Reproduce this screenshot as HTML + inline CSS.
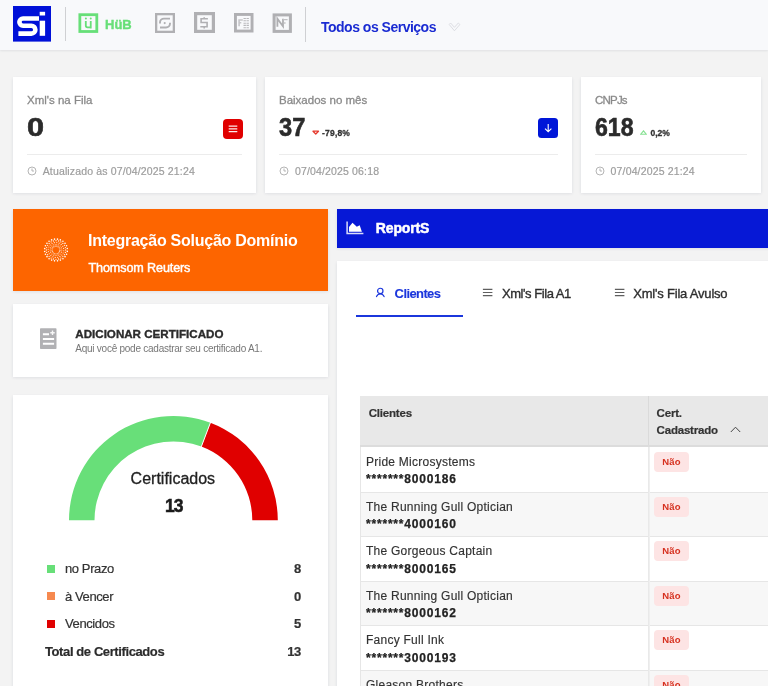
<!DOCTYPE html>
<html><head><meta charset="utf-8">
<style>
*{box-sizing:border-box;margin:0;padding:0}
html,body{width:768px;height:686px;overflow:hidden;background:#f3f3f3;font-family:"Liberation Sans",sans-serif;color:#333}
.a{position:absolute;white-space:nowrap;line-height:1}
.hdr{position:absolute;left:0;top:0;width:768px;height:50px;background:#f8f9fb;box-shadow:0 1px 2px rgba(60,70,90,.10)}
.card{position:absolute;background:#fff;box-shadow:0 0.5px 3px rgba(40,50,90,.12)}
.sep{position:absolute;width:1px;background:#cfd0d3}
.gico{position:absolute;border:3px solid #b2b2b5}
.lbl{font-size:11.5px;color:#8a8a8a;-webkit-text-stroke:0.3px #8a8a8a}
.big{font-size:26px;font-weight:bold;color:#2b2b2b;-webkit-text-stroke:0.6px #2b2b2b}
.foot{letter-spacing:0.15px;font-size:10.5px;color:#9d9d9d;-webkit-text-stroke:0.2px #9d9d9d}
.div{position:absolute;height:1px;background:#ececec}
.btn{position:absolute;width:20px;height:20px;border-radius:3px}
.tab{font-size:13px;color:#2e2e2e;-webkit-text-stroke:0.35px #2e2e2e}
.th{letter-spacing:-0.2px;font-size:11.5px;font-weight:bold;color:#333;-webkit-text-stroke:0.2px #333}
.row{position:absolute;left:360px;width:420px;border-bottom:1px solid #e6e6e6;border-left:1px solid #e6e6e6}
.row.g{background:#f7f7f7}
.nm{letter-spacing:0.25px;font-size:12px;color:#333;-webkit-text-stroke:0.15px #333}
.num{letter-spacing:0.8px;font-size:12px;font-weight:bold;color:#222;-webkit-text-stroke:0.25px #222}
.badge{position:absolute;left:654px;top:5px;width:35px;height:20px;border-radius:4px;background:#fde4e4;color:#d6301f;font-size:9.5px;letter-spacing:0.2px;font-weight:bold;text-align:center;line-height:20px}
.cdiv{position:absolute;left:288px;top:0;width:1px;height:100%;background:#e6e6e6}
.leg{letter-spacing:-0.4px;font-size:13px;-webkit-text-stroke:0.2px #333;color:#333}
.sq{position:absolute;width:8px;height:8px}
</style></head><body><div id="wrap" style="position:absolute;left:0;top:0;width:768px;height:686px;will-change:transform">
<div class="hdr"></div>
<!-- Si logo -->
<svg class="a" style="left:13px;top:6px" width="38" height="36" viewBox="0 0 38 36">
<rect width="38" height="35.6" fill="#0010d8"/>
<path d="M26 12.5 H10 A3.6 3.6 0 0 0 10 19.7 H18.4 A3.95 3.95 0 0 1 18.4 27.6 H5.4" fill="none" stroke="#fff" stroke-width="4.6"/>
<rect x="26.7" y="5.8" width="5.4" height="3.7" fill="#fff"/>
<rect x="26.7" y="14.7" width="5.4" height="15.1" fill="#fff"/>
</svg>
<div class="sep" style="left:65px;top:7px;height:34px"></div>
<!-- HuB -->

<svg class="a" style="left:78px;top:13px" width="21" height="21" viewBox="0 0 21 21">
<rect x="1.85" y="1.7" width="16.95" height="16.8" fill="none" stroke="#67df78" stroke-width="2.8"/>
<path d="M7.8 8 V12.6 Q7.8 14.3 9.5 14.3 H12.75 M12.75 8 V15.4" fill="none" stroke="#67df78" stroke-width="1.8"/>
<circle cx="7.9" cy="5.6" r="1" fill="#67df78"/><circle cx="12.75" cy="5.6" r="1" fill="#67df78"/>
</svg>
<div class="a" id="hub" style="left:105px;top:18px;font-size:13px;font-weight:bold;color:#67df78;-webkit-text-stroke:0.4px #67df78">HüB</div>
<!-- gray icons -->
<svg class="a" style="left:155px;top:13px" width="20" height="20" viewBox="0 0 20 20">
<rect x="1.15" y="1.15" width="17.7" height="17.7" fill="none" stroke="#b0b0b3" stroke-width="2.3"/>
<path d="M15 5.6 H9 A4 4 0 0 0 5 9.6 V10.5 M5 14.5 H11 A4 4 0 0 0 15 10.5 V9.7" fill="none" stroke="#b0b0b3" stroke-width="1.9"/>
<circle cx="9.7" cy="10.1" r="1.05" fill="#b0b0b3"/>
</svg>
<svg class="a" style="left:194px;top:12px" width="21" height="21" viewBox="0 0 21 21">
<rect x="1.6" y="1.6" width="17.8" height="17.8" fill="none" stroke="#b0b0b3" stroke-width="3.2"/>
<path d="M13.9 6.8 H7.1 V10.5 H13.1 V14.7 H6.3 M10.2 5.2 V6.8 M10.2 14.7 V16.4" fill="none" stroke="#b0b0b3" stroke-width="1.6"/>
</svg>
<svg class="a" style="left:234px;top:13px" width="20" height="20" viewBox="0 0 20 20">
<rect x="1.45" y="1.45" width="16.6" height="16.6" fill="none" stroke="#b0b0b3" stroke-width="2.9"/>
<path d="M5.1 13.3 V7.05 H8.8 M5.1 9.8 H7.3" fill="none" stroke="#c6c6c9" stroke-width="1.6"/>
<path d="M9.5 5.5 H15.2 M9.5 7.8 H15.2 M9.5 10.3 H15.2 M9.5 12.35 H15.2 M9.5 14.8 H15.2" fill="none" stroke="#b8b8bb" stroke-width="1.1" stroke-dasharray="2.4 0.6"/>
</svg>
<svg class="a" style="left:272px;top:13px" width="20" height="20" viewBox="0 0 20 20">
<rect x="2.1" y="1.9" width="16.3" height="16.5" fill="none" stroke="#b0b0b3" stroke-width="3"/>
<path d="M5.4 13.7 V5.8 L11 13.3 V5.8" fill="none" stroke="#aeaeb1" stroke-width="1.8"/>
<path d="M11 6.6 H15.6 M11.6 10 H13.6" fill="none" stroke="#c2c2c5" stroke-width="1.3"/>
</svg>
<div class="sep" style="left:305px;top:7px;height:34.5px"></div>
<div class="a" id="todos" style="left:321px;top:20px;font-size:14px;letter-spacing:-0.5px;font-weight:bold;color:#1a2bd2">Todos os Serviços</div>
<svg class="a" style="left:447px;top:20.8px" width="15" height="12" viewBox="0 0 15 12">
<path d="M2.2 3.5 L7.45 9.8 L12.9 3.5 L11.3 2 L7.45 6.3 L3.6 2 Z" fill="none" stroke="#d9dae0" stroke-width="0.9" stroke-linejoin="round"/>
</svg>

<!-- stat cards -->
<div class="card" style="left:13px;top:77px;width:243px;height:116px"></div>
<div class="a lbl" id="l1" style="left:27px;top:94.6px">Xml's na Fila</div>
<div class="a big" id="b1" style="left:27px;top:114px;transform:scaleX(1.18);transform-origin:0 0">0</div>
<div class="btn" style="left:222.6px;top:118.6px;background:#e00000;border-radius:4px"></div>
<svg class="a" style="left:222.6px;top:118.6px" width="20" height="20"><path d="M5.7 7.15 H14.3 M5.7 9.9 H14.3 M5.7 12.7 H14.3" stroke="#fff" stroke-width="1.3" opacity="0.92"/></svg>
<div class="div" style="left:27px;top:154px;width:215px"></div>
<svg class="a" style="left:27px;top:166px" width="10" height="10" viewBox="0 0 10 10"><circle cx="5" cy="5" r="4" fill="none" stroke="#b5b5b5" stroke-width="1"/><path d="M5 2.5 V5 H7" fill="none" stroke="#b5b5b5" stroke-width="1"/></svg>
<div class="a foot" id="f1" style="left:42.7px;top:166.3px">Atualizado às 07/04/2025 21:24</div>

<div class="card" style="left:265px;top:77px;width:307px;height:116px"></div>
<div class="a lbl" id="l2" style="left:279px;top:94.6px">Baixados no mês</div>
<div class="a big" id="b2" style="left:279px;top:114px;transform:scaleX(0.91);transform-origin:0 0">37</div>
<svg class="a" style="left:311.5px;top:130px" width="8" height="5" viewBox="0 0 8 5"><path d="M1 1.2 H6.5 L3.75 4 Z" fill="none" stroke="#e53a2e" stroke-width="1.3" stroke-linejoin="round"/></svg>
<div class="a" id="p2" style="left:322px;top:128.5px;font-size:8.5px;letter-spacing:0.2px;font-weight:bold;color:#333;-webkit-text-stroke:0.3px #333">-79,8%</div>
<div class="btn" style="left:538px;top:118.3px;background:#0016d8;border-radius:3.5px"></div>
<svg class="a" style="left:538px;top:118.3px" width="20" height="20"><path d="M10.2 6.1 V13.6 M7 10.6 L10.2 13.7 L13.4 10.6" fill="none" stroke="#fff" stroke-width="1.1"/></svg>
<div class="div" style="left:279px;top:154px;width:279px"></div>
<svg class="a" style="left:279px;top:166px" width="10" height="10" viewBox="0 0 10 10"><circle cx="5" cy="5" r="4" fill="none" stroke="#b5b5b5" stroke-width="1"/><path d="M5 2.5 V5 H7" fill="none" stroke="#b5b5b5" stroke-width="1"/></svg>
<div class="a foot" id="f2" style="left:295px;top:166.3px">07/04/2025 06:18</div>

<div class="card" style="left:581px;top:77px;width:180px;height:116px"></div>
<div class="a lbl" id="l3" style="left:595px;top:94.6px;letter-spacing:-0.8px">CNPJs</div>
<div class="a big" id="b3" style="left:595px;top:114px;transform:scaleX(0.89);transform-origin:0 0">618</div>
<svg class="a" style="left:640px;top:129.5px" width="7" height="5" viewBox="0 0 7 5"><path d="M0.8 4.2 H6.2 L3.5 0.8 Z" fill="none" stroke="#88e194" stroke-width="1.1"/></svg>
<div class="a" id="p3" style="left:650.5px;top:128.5px;font-size:8.5px;font-weight:bold;color:#333;-webkit-text-stroke:0.3px #333">0,2%</div>
<div class="div" style="left:595px;top:154px;width:152px"></div>
<svg class="a" style="left:595px;top:166px" width="10" height="10" viewBox="0 0 10 10"><circle cx="5" cy="5" r="4" fill="none" stroke="#b5b5b5" stroke-width="1"/><path d="M5 2.5 V5 H7" fill="none" stroke="#b5b5b5" stroke-width="1"/></svg>
<div class="a foot" id="f3" style="left:610.6px;top:166.3px">07/04/2025 21:24</div>

<!-- orange -->
<div class="card" style="left:13px;top:209px;width:315px;height:82px;background:#fd6500"></div>
<svg class="a" style="left:43px;top:236.5px" width="26" height="26" viewBox="0 0 26 26" id="tr"><circle cx="13" cy="13" r="3.9" fill="none" stroke="#fff" stroke-width="1.3" stroke-dasharray="0.8 0.6" opacity="0.75"/><circle cx="18.80" cy="13.00" r="0.55" fill="#fff" opacity="0.8"/><circle cx="18.36" cy="15.13" r="0.55" fill="#fff" opacity="0.8"/><circle cx="17.10" cy="16.94" r="0.55" fill="#fff" opacity="0.8"/><circle cx="15.22" cy="18.14" r="0.55" fill="#fff" opacity="0.8"/><circle cx="13.00" cy="18.57" r="0.55" fill="#fff" opacity="0.8"/><circle cx="10.78" cy="18.14" r="0.55" fill="#fff" opacity="0.8"/><circle cx="8.90" cy="16.94" r="0.55" fill="#fff" opacity="0.8"/><circle cx="7.64" cy="15.13" r="0.55" fill="#fff" opacity="0.8"/><circle cx="7.20" cy="13.00" r="0.55" fill="#fff" opacity="0.8"/><circle cx="7.64" cy="10.87" r="0.55" fill="#fff" opacity="0.8"/><circle cx="8.90" cy="9.06" r="0.55" fill="#fff" opacity="0.8"/><circle cx="10.78" cy="7.86" r="0.55" fill="#fff" opacity="0.8"/><circle cx="13.00" cy="7.43" r="0.55" fill="#fff" opacity="0.8"/><circle cx="15.22" cy="7.86" r="0.55" fill="#fff" opacity="0.8"/><circle cx="17.10" cy="9.06" r="0.55" fill="#fff" opacity="0.8"/><circle cx="18.36" cy="10.87" r="0.55" fill="#fff" opacity="0.8"/><circle cx="20.76" cy="13.75" r="0.6" fill="#fff" opacity="0.85"/><circle cx="20.14" cy="16.01" r="0.6" fill="#fff" opacity="0.85"/><circle cx="18.82" cy="17.98" r="0.6" fill="#fff" opacity="0.85"/><circle cx="16.93" cy="19.47" r="0.6" fill="#fff" opacity="0.85"/><circle cx="14.66" cy="20.32" r="0.6" fill="#fff" opacity="0.85"/><circle cx="12.22" cy="20.45" r="0.6" fill="#fff" opacity="0.85"/><circle cx="9.86" cy="19.85" r="0.6" fill="#fff" opacity="0.85"/><circle cx="7.81" cy="18.59" r="0.6" fill="#fff" opacity="0.85"/><circle cx="6.26" cy="16.77" r="0.6" fill="#fff" opacity="0.85"/><circle cx="5.38" cy="14.59" r="0.6" fill="#fff" opacity="0.85"/><circle cx="5.24" cy="12.25" r="0.6" fill="#fff" opacity="0.85"/><circle cx="5.86" cy="9.99" r="0.6" fill="#fff" opacity="0.85"/><circle cx="7.18" cy="8.02" r="0.6" fill="#fff" opacity="0.85"/><circle cx="9.07" cy="6.53" r="0.6" fill="#fff" opacity="0.85"/><circle cx="11.34" cy="5.68" r="0.6" fill="#fff" opacity="0.85"/><circle cx="13.78" cy="5.55" r="0.6" fill="#fff" opacity="0.85"/><circle cx="16.14" cy="6.15" r="0.6" fill="#fff" opacity="0.85"/><circle cx="18.19" cy="7.41" r="0.6" fill="#fff" opacity="0.85"/><circle cx="19.74" cy="9.23" r="0.6" fill="#fff" opacity="0.85"/><circle cx="20.62" cy="11.41" r="0.6" fill="#fff" opacity="0.85"/><circle cx="22.70" cy="13.00" r="0.65" fill="#fff" opacity="0.9"/><circle cx="22.37" cy="15.41" r="0.65" fill="#fff" opacity="0.9"/><circle cx="21.40" cy="17.66" r="0.65" fill="#fff" opacity="0.9"/><circle cx="19.86" cy="19.58" r="0.65" fill="#fff" opacity="0.9"/><circle cx="17.85" cy="21.06" r="0.65" fill="#fff" opacity="0.9"/><circle cx="15.51" cy="21.99" r="0.65" fill="#fff" opacity="0.9"/><circle cx="13.00" cy="22.31" r="0.65" fill="#fff" opacity="0.9"/><circle cx="10.49" cy="21.99" r="0.65" fill="#fff" opacity="0.9"/><circle cx="8.15" cy="21.06" r="0.65" fill="#fff" opacity="0.9"/><circle cx="6.14" cy="19.58" r="0.65" fill="#fff" opacity="0.9"/><circle cx="4.60" cy="17.66" r="0.65" fill="#fff" opacity="0.9"/><circle cx="3.63" cy="15.41" r="0.65" fill="#fff" opacity="0.9"/><circle cx="3.30" cy="13.00" r="0.65" fill="#fff" opacity="0.9"/><circle cx="3.63" cy="10.59" r="0.65" fill="#fff" opacity="0.9"/><circle cx="4.60" cy="8.34" r="0.65" fill="#fff" opacity="0.9"/><circle cx="6.14" cy="6.42" r="0.65" fill="#fff" opacity="0.9"/><circle cx="8.15" cy="4.94" r="0.65" fill="#fff" opacity="0.9"/><circle cx="10.49" cy="4.01" r="0.65" fill="#fff" opacity="0.9"/><circle cx="13.00" cy="3.69" r="0.65" fill="#fff" opacity="0.9"/><circle cx="15.51" cy="4.01" r="0.65" fill="#fff" opacity="0.9"/><circle cx="17.85" cy="4.94" r="0.65" fill="#fff" opacity="0.9"/><circle cx="19.86" cy="6.42" r="0.65" fill="#fff" opacity="0.9"/><circle cx="21.40" cy="8.34" r="0.65" fill="#fff" opacity="0.9"/><circle cx="22.37" cy="10.59" r="0.65" fill="#fff" opacity="0.9"/><circle cx="24.30" cy="14.42" r="0.8" fill="#fff" opacity="1"/><circle cx="23.54" cy="17.18" r="0.8" fill="#fff" opacity="1"/><circle cx="22.05" cy="19.65" r="0.8" fill="#fff" opacity="1"/><circle cx="19.95" cy="21.68" r="0.8" fill="#fff" opacity="1"/><circle cx="17.37" cy="23.11" r="0.8" fill="#fff" opacity="1"/><circle cx="14.50" cy="23.85" r="0.8" fill="#fff" opacity="1"/><circle cx="11.52" cy="23.85" r="0.8" fill="#fff" opacity="1"/><circle cx="8.65" cy="23.11" r="0.8" fill="#fff" opacity="1"/><circle cx="6.07" cy="21.69" r="0.8" fill="#fff" opacity="1"/><circle cx="3.96" cy="19.67" r="0.8" fill="#fff" opacity="1"/><circle cx="2.47" cy="17.20" r="0.8" fill="#fff" opacity="1"/><circle cx="1.70" cy="14.44" r="0.8" fill="#fff" opacity="1"/><circle cx="1.70" cy="11.58" r="0.8" fill="#fff" opacity="1"/><circle cx="2.46" cy="8.82" r="0.8" fill="#fff" opacity="1"/><circle cx="3.95" cy="6.35" r="0.8" fill="#fff" opacity="1"/><circle cx="6.05" cy="4.32" r="0.8" fill="#fff" opacity="1"/><circle cx="8.63" cy="2.89" r="0.8" fill="#fff" opacity="1"/><circle cx="11.50" cy="2.15" r="0.8" fill="#fff" opacity="1"/><circle cx="14.48" cy="2.15" r="0.8" fill="#fff" opacity="1"/><circle cx="17.35" cy="2.89" r="0.8" fill="#fff" opacity="1"/><circle cx="19.93" cy="4.31" r="0.8" fill="#fff" opacity="1"/><circle cx="22.04" cy="6.33" r="0.8" fill="#fff" opacity="1"/><circle cx="23.53" cy="8.80" r="0.8" fill="#fff" opacity="1"/><circle cx="24.30" cy="11.56" r="0.8" fill="#fff" opacity="1"/></svg>
<div class="a" id="integ" style="left:88px;top:232.6px;letter-spacing:-0.25px;font-size:16px;font-weight:bold;color:#fff">Integração Solução Domínio</div>
<div class="a" id="thom" style="left:88.5px;top:262.3px;font-size:12.6px;letter-spacing:-0.12px;color:#fff;-webkit-text-stroke:0.45px #fff">Thomsom Reuters</div>

<!-- add cert -->
<div class="card" style="left:13px;top:304px;width:315px;height:73px"></div>
<svg class="a" style="left:40px;top:328px" width="17" height="22" viewBox="0 0 17 22">
<rect x="0" y="0.3" width="16.5" height="20.8" rx="0.8" fill="#b1b1b4"/>
<path d="M2.9 6.2 H9 M2.9 11.1 H14.1 M2.9 15.8 H14.1" stroke="#fff" stroke-width="2"/>
<path d="M12.5 2.6 V7 M10.3 4.8 H14.7" stroke="#fff" stroke-width="1.4" opacity="0.9"/>
</svg>
<div class="a" id="adic" style="left:75.3px;top:327.8px;font-size:11.6px;letter-spacing:0px;font-weight:bold;color:#2b2b2b;-webkit-text-stroke:0.35px #2b2b2b">ADICIONAR CERTIFICADO</div>
<div class="a" id="aqui" style="left:75.3px;top:343.5px;font-size:10px;letter-spacing:-0.25px;color:#777">Aqui você pode cadastrar seu certificado A1.</div>

<!-- gauge card -->
<div class="card" style="left:13px;top:395px;width:315px;height:300px"></div>
<svg class="a" style="left:0;top:390px" width="340" height="140" viewBox="0 390 340 140" id="gauge"><path d="M69.00 520.30 A104.4 104.4 0 0 1 210.42 422.68 L201.38 446.53 A78.9 78.9 0 0 0 94.50 520.30 Z" fill="#68df79"/><path d="M210.42 422.68 A104.4 104.4 0 0 1 277.80 520.30 L252.30 520.30 A78.9 78.9 0 0 0 201.38 446.53 Z" fill="#e00000"/><path d="M210.78 421.75 L201.02 447.46" stroke="#fff" stroke-width="1"/></svg>
<div class="a" id="certs" style="left:130.6px;top:471px;font-size:16px;color:#222;-webkit-text-stroke:0.3px #222">Certificados</div>
<div class="a" id="c13" style="left:165px;top:498px;font-size:17.5px;letter-spacing:-1px;font-weight:bold;color:#1a1a1a;-webkit-text-stroke:0.5px #1a1a1a">13</div>

<div class="sq" style="left:47px;top:564.5px;background:#67df78"></div>
<div class="a leg" id="lg1" style="left:65px;top:562.4px">no Prazo</div>
<div class="a leg" style="left:250px;top:562.4px;width:50.8px;text-align:right;font-weight:bold">8</div>
<div class="sq" style="left:47px;top:592px;background:#f6894f"></div>
<div class="a leg" id="lg2" style="left:65px;top:590px">à Vencer</div>
<div class="a leg" style="left:250px;top:590px;width:50.8px;text-align:right;font-weight:bold">0</div>
<div class="sq" style="left:47px;top:619.5px;background:#e00000"></div>
<div class="a leg" id="lg3" style="left:65px;top:617.2px">Vencidos</div>
<div class="a leg" style="left:250px;top:617.2px;width:50.8px;text-align:right;font-weight:bold">5</div>
<div class="a leg" id="lg4" style="left:45px;top:644.7px;font-weight:bold;color:#2b2b2b">Total de Certificados</div>
<div class="a leg" style="left:250px;top:644.7px;width:50.8px;text-align:right;font-weight:bold">13</div>

<!-- reports -->
<div class="card" style="left:337px;top:209px;width:440px;height:38.6px;background:#0618d6"></div>
<svg class="a" style="left:346px;top:221px" width="18" height="14" viewBox="0 0 18 14">
<path d="M1.1 0.4 V12.5 H17.4" fill="none" stroke="#fff" stroke-width="1.5" opacity="0.85"/>
<path d="M3 6.1 L6.5 1.8 L10.8 5.7 L13.7 4.2 L15.9 10.8 H3 Z" fill="#fff"/>
</svg>
<div class="a" id="rep" style="left:375.8px;top:221px;font-size:14px;letter-spacing:-0.15px;font-weight:bold;color:#fff;-webkit-text-stroke:0.5px #fff">ReportS</div>

<div class="card" style="left:337px;top:261px;width:440px;height:440px"></div>
<svg class="a" style="left:372px;top:284px" width="18" height="18" viewBox="0 0 18 18">
<circle cx="8.27" cy="6.96" r="2.7" fill="none" stroke="#1b36dc" stroke-width="1.2"/>
<path d="M4.5 12.6 Q5.8 9.9 8.3 9.9 Q10.8 9.9 12.1 12.6" fill="none" stroke="#1b36dc" stroke-width="1.2" stroke-linecap="round"/>
</svg>
<div class="a tab" id="t1" style="left:394.6px;top:286.5px;letter-spacing:-0.6px;color:#1b36dc;font-weight:bold;-webkit-text-stroke:0.1px #1b36dc">Clientes</div>
<div class="a" style="left:356px;top:315.3px;width:107px;height:2.2px;background:#1b36dc"></div>
<svg class="a" style="left:482px;top:288px" width="11" height="10"><path d="M0.9 1.4 H10.4 M0.9 4.5 H10.4 M0.9 7.6 H10.4" stroke="#5f5f5f" stroke-width="1.1"/></svg>
<div class="a tab" id="t2" style="left:502px;top:286.5px;letter-spacing:-0.45px">Xml's Fila A1</div>
<svg class="a" style="left:613.5px;top:288px" width="11" height="10"><path d="M0.9 1.4 H10.4 M0.9 4.5 H10.4 M0.9 7.6 H10.4" stroke="#5f5f5f" stroke-width="1.1"/></svg>
<div class="a tab" id="t3" style="left:633.2px;top:286.5px;letter-spacing:-0.2px">Xml's Fila Avulso</div>

<!-- table -->
<div class="a" style="left:360px;top:396px;width:420px;height:51px;background:#e8e8e8;border-bottom:2px solid #dcdcdc"></div>
<div class="a" style="left:648px;top:396px;width:1px;height:49px;background:#dadada"></div>
<div class="a th" id="th1" style="left:368.7px;top:408px">Clientes</div>
<div class="a th" id="th2" style="left:656.6px;top:408.2px">Cert.</div>
<div class="a th" id="th3" style="left:656.6px;top:425.1px">Cadastrado</div>
<svg class="a" style="left:730px;top:425.5px" width="11" height="7"><path d="M0.8 6 L5.5 1.2 L10.2 6" fill="none" stroke="#444" stroke-width="1"/></svg>

<div class="row" style="top:447px;height:46px"></div>
<div class="row g" style="top:493px;height:44px"></div>
<div class="row" style="top:537px;height:45px"></div>
<div class="row g" style="top:582px;height:44px"></div>
<div class="row" style="top:626px;height:45px"></div>
<div class="row g" style="top:671px;height:45px"></div>
<div class="a" style="left:648px;top:447px;width:1px;height:240px;background:#e9e9e9"></div>
<div class="a" style="left:649px;top:447px;width:1px;height:240px;background:#efefef"></div>
<div class="a nm" style="left:366px;top:456.0px">Pride Microsystems</div><div class="a num" style="left:366px;top:473.3px">*******8000186</div><div class="badge" style="top:452.0px">Não</div>
<div class="a nm" style="left:366px;top:500.6px">The Running Gull Optician</div><div class="a num" style="left:366px;top:517.9px">*******4000160</div><div class="badge" style="top:496.6px">Não</div>
<div class="a nm" style="left:366px;top:545.2px">The Gorgeous Captain</div><div class="a num" style="left:366px;top:562.5px">*******8000165</div><div class="badge" style="top:541.2px">Não</div>
<div class="a nm" style="left:366px;top:589.8px">The Running Gull Optician</div><div class="a num" style="left:366px;top:607.1px">*******8000162</div><div class="badge" style="top:585.8px">Não</div>
<div class="a nm" style="left:366px;top:634.4px">Fancy Full Ink</div><div class="a num" style="left:366px;top:651.7px">*******3000193</div><div class="badge" style="top:630.4px">Não</div>
<div class="a nm" style="left:366px;top:679.0px">Gleason Brothers</div><div class="a num" style="left:366px;top:696.3px">*******0000000</div><div class="badge" style="top:675.0px">Não</div>
</div></body></html>
